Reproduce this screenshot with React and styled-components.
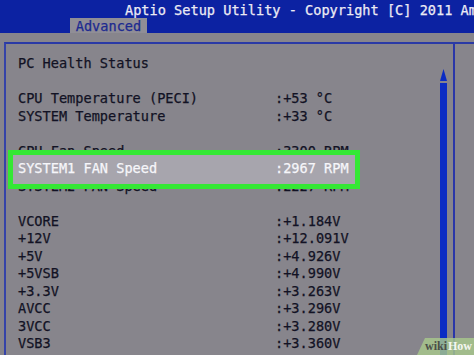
import React from "react";
import styled, { createGlobalStyle } from "styled-components";

const GRAY = "#87858c";
const Global = createGlobalStyle`
  html, body { margin: 0; padding: 0; background: ${GRAY}; overflow: hidden; }
  #root { width: 474px; height: 355px; overflow: hidden; }
`;

const Screen = styled.div`
  position: relative;
  width: 474px;
  height: 355px;
  background: ${GRAY};
  font-family: "DejaVu Sans Mono", "Liberation Mono", monospace;
  font-size: 13.6px;
  color: #121224;
  -webkit-text-stroke: 0.25px currentColor;
  display: flex;
  flex-direction: column;
  overflow: hidden;
`;

const Header = styled.header`
  height: 33px;
  background: #0c22a2;
  display: flex;
  flex-direction: column;
`;

const Title = styled.div`
  height: 18px;
  line-height: 18px;
  padding: 1px 0 0 125px;
  box-sizing: border-box;
  white-space: nowrap;
  overflow: hidden;
  color: #ecebf4;
`;

const Tabs = styled.nav`
  display: flex;
  padding-left: 70px;
`;

const Tab = styled.div`
  height: 15px;
  width: 77px;
  box-sizing: border-box;
  padding-top: 2px;
  line-height: 13px;
  text-align: center;
  background: #908e96;
  color: #1c2a90;
`;

const Body = styled.div`
  flex: 1;
  margin: 9px 0 0 4px;
  border-top: 2px solid #2a3aa6;
  border-left: 2px solid #3543a8;
  display: flex;
  min-height: 0;
`;

const Main = styled.main`
  width: 434px;
  padding: 11px 0 0 12px;
  box-sizing: border-box;
`;

const Row = styled.div`
  position: relative;
  display: grid;
  grid-template-columns: 257px 1fr;
  height: 17.5px;
  line-height: 17.5px;
  white-space: nowrap;
  z-index: ${(p) => (p.$hl ? 2 : "auto")};
  color: ${(p) => (p.$hl ? "#f6f6fa" : "inherit")};
  &::before {
    content: "";
    display: ${(p) => (p.$hl ? "block" : "none")};
    position: absolute;
    left: -10px;
    top: -10px;
    width: 352px;
    height: 39px;
    box-sizing: border-box;
    border: 5px solid #34e834;
    background: #a7a5ad;
    z-index: -1;
  }
`;

const Unit = styled.span`
  margin-left: 8px;
`;

const ScrollCol = styled.div`
  width: 7px;
  margin-top: 25px;
  display: flex;
  flex-direction: column;
  align-items: center;
`;

const Thumb = styled.div`
  flex: 1;
  width: 7px;
  margin-top: 2px;
  background: #0b2cc4;
`;

const Divider = styled.div`
  width: 1.5px;
  margin-left: 6px;
  background: #2a36a8;
`;

const Badge = styled.div`
  position: absolute;
  right: 0;
  bottom: 0;
  width: 57px;
  height: 17px;
  background: rgba(168, 200, 140, 0.82);
  clip-path: polygon(8px 0, 100% 0, 100% 100%, 0 100%);
  font-family: "Liberation Serif", serif;
  font-weight: bold;
  font-size: 12px;
  line-height: 17px;
  padding-left: 8px;
  box-sizing: border-box;
  white-space: nowrap;
  -webkit-text-stroke: 0;
`;

const Wiki = styled.span`
  color: #4a4f48;
  margin-right: 1px;
`;
const How = styled.span`
  color: #f4f6f0;
`;

const rows = [
  ["PC Health Status", ""],
  ["", ""],
  ["CPU Temperature (PECI)", ":+53", "°C"],
  ["SYSTEM Temperature", ":+33", "°C"],
  ["", ""],
  ["CPU Fan Speed", ":3300 RPM"],
  ["SYSTEM1 FAN Speed", ":2967 RPM", null, true],
  ["SYSTEM2 FAN Speed", ":2227 RPM"],
  ["", ""],
  ["VCORE", ":+1.184V"],
  ["+12V", ":+12.091V"],
  ["+5V", ":+4.926V"],
  ["+5VSB", ":+4.990V"],
  ["+3.3V", ":+3.263V"],
  ["AVCC", ":+3.296V"],
  ["3VCC", ":+3.280V"],
  ["VSB3", ":+3.360V"],
];

export default function App() {
  return (
    <Screen>
      <Global />
      <Header>
        <Title>Aptio Setup Utility - Copyright [C] 2011 American Megatrends, Inc.</Title>
        <Tabs>
          <Tab>Advanced</Tab>
        </Tabs>
      </Header>
      <Body>
        <Main>
          {rows.map(([label, value, unit, hl], i) => (
            <Row key={i} $hl={hl}>
              <span>{label}</span>
              <span>
                {value}
                {unit && <Unit>{unit}</Unit>}
              </span>
            </Row>
          ))}
        </Main>
        <ScrollCol>
          <svg width="7" height="12" viewBox="0 0 7 12">
            <polygon points="3.5,0 7,12 0,12" fill="#0b2cc4" />
          </svg>
          <Thumb />
        </ScrollCol>
        <Divider />
      </Body>
      <Badge>
        <Wiki>wiki</Wiki>
        <How>How</How>
      </Badge>
    </Screen>
  );
}
